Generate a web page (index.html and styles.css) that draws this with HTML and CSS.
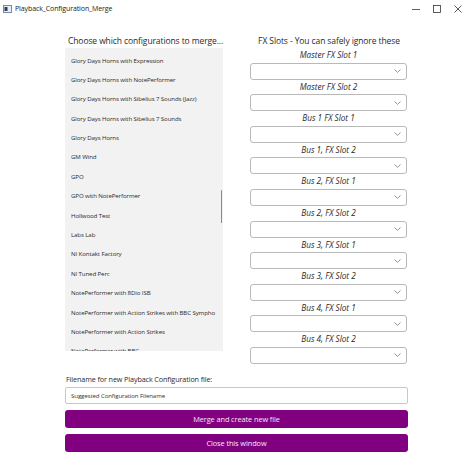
FILE: index.html
```html
<!DOCTYPE html>
<html>
<head>
<meta charset="utf-8">
<link rel="stylesheet" href="styles.css">
</head>
<body>
<div class="window">
  <div class="titlebar">
    <svg class="appicon" width="9" height="8" viewBox="0 0 9 8"><rect x="0.5" y="0.5" width="8" height="7" fill="#e8eef6" stroke="#7a8aa0"/><rect x="1.5" y="2" width="3" height="4" fill="#2b3f5c"/></svg>
    <span class="title">Playback_Configuration_Merge</span>
    <div class="controls">
      <svg width="10" height="10" viewBox="0 0 10 10"><line x1="1" y1="5.5" x2="9" y2="5.5" stroke="#333" stroke-width="0.8"/></svg>
      <svg width="10" height="10" viewBox="0 0 10 10"><rect x="1.5" y="1.5" width="7" height="7" fill="none" stroke="#333" stroke-width="0.8"/></svg>
      <svg width="10" height="10" viewBox="0 0 10 10"><path d="M1.5 1.5 L8.5 8.5 M8.5 1.5 L1.5 8.5" stroke="#333" stroke-width="0.8"/></svg>
    </div>
  </div>
  <div class="main">
    <div class="left">
      <div class="header">Choose which configurations to merge...</div>
      <div class="list">
        <div class="item">Glory Days Horns with Expression</div>
        <div class="item">Glory Days Horns with NotePerformer</div>
        <div class="item">Glory Days Horns with Sibelius 7 Sounds (Jazz)</div>
        <div class="item">Glory Days Horns with Sibelius 7 Sounds</div>
        <div class="item">Glory Days Horns</div>
        <div class="item">GM Wind</div>
        <div class="item">GPO</div>
        <div class="item">GPO with NotePerformer</div>
        <div class="item">Hollwood Test</div>
        <div class="item">Labs Lab</div>
        <div class="item">NI Kontakt Factory</div>
        <div class="item">NI Tuned Perc</div>
        <div class="item">NotePerformer with 8Dio ISB</div>
        <div class="item">NotePerformer with Action Strikes with BBC Sympho</div>
        <div class="item">NotePerformer with Action Strikes</div>
        <div class="item">NotePerformer with BBC</div>
        <div class="thumb"></div>
      </div>
    </div>
    <div class="right">
      <div class="header">FX Slots - You can safely ignore these</div>
      <div class="slot"><div class="label">Master FX Slot 1</div><div class="combo"><svg width="7" height="4" viewBox="0 0 7 4"><path d="M0.5 0.5 L3.5 3.3 L6.5 0.5" fill="none" stroke="#666" stroke-width="0.7"/></svg></div></div>
      <div class="slot"><div class="label">Master FX Slot 2</div><div class="combo"><svg width="7" height="4" viewBox="0 0 7 4"><path d="M0.5 0.5 L3.5 3.3 L6.5 0.5" fill="none" stroke="#666" stroke-width="0.7"/></svg></div></div>
      <div class="slot"><div class="label">Bus 1 FX Slot 1</div><div class="combo"><svg width="7" height="4" viewBox="0 0 7 4"><path d="M0.5 0.5 L3.5 3.3 L6.5 0.5" fill="none" stroke="#666" stroke-width="0.7"/></svg></div></div>
      <div class="slot"><div class="label">Bus 1, FX Slot 2</div><div class="combo"><svg width="7" height="4" viewBox="0 0 7 4"><path d="M0.5 0.5 L3.5 3.3 L6.5 0.5" fill="none" stroke="#666" stroke-width="0.7"/></svg></div></div>
      <div class="slot"><div class="label">Bus 2, FX Slot 1</div><div class="combo"><svg width="7" height="4" viewBox="0 0 7 4"><path d="M0.5 0.5 L3.5 3.3 L6.5 0.5" fill="none" stroke="#666" stroke-width="0.7"/></svg></div></div>
      <div class="slot"><div class="label">Bus 2, FX Slot 2</div><div class="combo"><svg width="7" height="4" viewBox="0 0 7 4"><path d="M0.5 0.5 L3.5 3.3 L6.5 0.5" fill="none" stroke="#666" stroke-width="0.7"/></svg></div></div>
      <div class="slot"><div class="label">Bus 3, FX Slot 1</div><div class="combo"><svg width="7" height="4" viewBox="0 0 7 4"><path d="M0.5 0.5 L3.5 3.3 L6.5 0.5" fill="none" stroke="#666" stroke-width="0.7"/></svg></div></div>
      <div class="slot"><div class="label">Bus 3, FX Slot 2</div><div class="combo"><svg width="7" height="4" viewBox="0 0 7 4"><path d="M0.5 0.5 L3.5 3.3 L6.5 0.5" fill="none" stroke="#666" stroke-width="0.7"/></svg></div></div>
      <div class="slot"><div class="label">Bus 4, FX Slot 1</div><div class="combo"><svg width="7" height="4" viewBox="0 0 7 4"><path d="M0.5 0.5 L3.5 3.3 L6.5 0.5" fill="none" stroke="#666" stroke-width="0.7"/></svg></div></div>
      <div class="slot"><div class="label">Bus 4, FX Slot 2</div><div class="combo"><svg width="7" height="4" viewBox="0 0 7 4"><path d="M0.5 0.5 L3.5 3.3 L6.5 0.5" fill="none" stroke="#666" stroke-width="0.7"/></svg></div></div>
    </div>
  </div>
  <div class="bottom">
    <div class="flabel">Filename for new Playback Configuration file:</div>
    <div class="input">Suggested Configuration Filename</div>
    <div class="btn">Merge and create new file</div>
    <div class="btn">Close this window</div>
  </div>
</div>
</body>
</html>
```
FILE: styles.css
```css
html, body {
  margin: 0;
  padding: 0;
  background: #ffffff;
}
body {
  font-family: "Open Sans", "Noto Sans", sans-serif;
  color: #1f1f1f;
  width: 474px;
  height: 462px;
  overflow: hidden;
}
.window {
  width: 474px;
  height: 462px;
}
.titlebar {
  height: 17px;
  display: flex;
  align-items: center;
  padding-left: 3px;
}
.appicon {
  margin-right: 3px;
}
.title {
  font-size: 7px;
  color: #222;
  letter-spacing: -0.1px;
}
.controls {
  margin-left: auto;
  display: flex;
  gap: 11px;
  padding-right: 11px;
}
.main {
  display: flex;
  padding-left: 65px;
  padding-top: 17px;
  gap: 27px;
}
.left {
  width: 158px;
  display: flex;
  flex-direction: column;
}
.header {
  height: 14px;
  font-size: 8.5px;
  line-height: 14px;
  text-align: center;
  color: #2a2a2a;
  white-space: nowrap;
  letter-spacing: -0.1px;
}
.left .header {
  padding-left: 3px;
}
.list {
  position: relative;
  height: 303px;
  background: #f2f2f2;
  overflow: hidden;
  padding-top: 2.5px;
  box-sizing: border-box;
}
.item {
  height: 19.4px;
  line-height: 19.4px;
  padding-left: 6px;
  font-size: 6.1px;
  color: #2a2a2a;
  white-space: nowrap;
  letter-spacing: -0.1px;
}
.thumb {
  position: absolute;
  left: 155.5px;
  top: 142px;
  width: 1.5px;
  height: 33px;
  background: #8a8a8a;
  border-radius: 1px;
}
.right {
  width: 157px;
  display: flex;
  flex-direction: column;
}
.right .header {
  padding-left: 1px;
}
.slot {
  height: 31.6px;
  display: flex;
  flex-direction: column;
}
.label {
  height: 14.6px;
  line-height: 14px;
  font-size: 8.2px;
  font-style: italic;
  text-align: center;
  color: #2a2a2a;
}
.combo {
  height: 17px;
  box-sizing: border-box;
  border: 1px solid #b9b9b9;
  border-radius: 3px;
  background: #fff;
  display: flex;
  align-items: center;
  justify-content: flex-end;
  padding-right: 5px;
}
.bottom {
  padding-left: 65px;
  padding-top: 9px;
  width: 343px;
  display: flex;
  flex-direction: column;
}
.flabel {
  font-size: 7.2px;
  height: 13px;
  line-height: 13px;
  padding-left: 1px;
  color: #2a2a2a;
  letter-spacing: -0.1px;
}
.input {
  height: 17px;
  margin-top: 1px;
  box-sizing: border-box;
  border: 1px solid #c8c8c8;
  border-radius: 2px;
  font-size: 6.1px;
  line-height: 15px;
  padding-left: 5px;
  color: #333;
  letter-spacing: -0.1px;
}
.btn {
  height: 18px;
  margin-top: 6px;
  background: #800080;
  border-radius: 3px;
  color: #f4e8f4;
  font-size: 7.4px;
  line-height: 18px;
  text-align: center;
  letter-spacing: -0.1px;
}
```
